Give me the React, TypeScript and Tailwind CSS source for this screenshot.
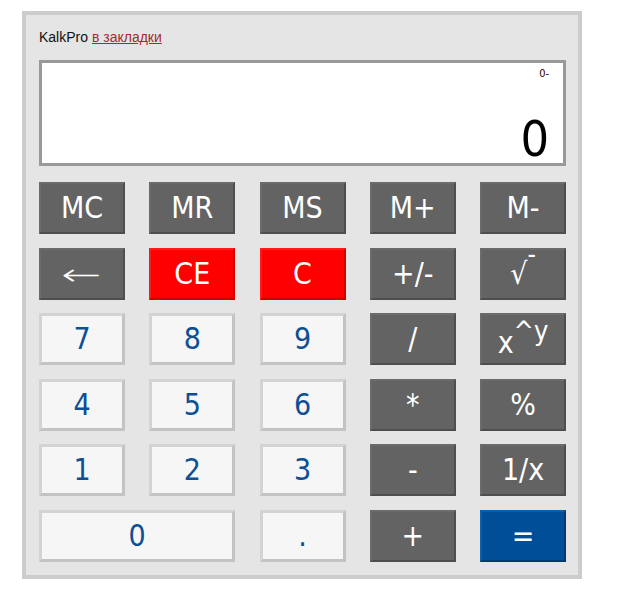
import React from 'react';

type Kind = 'dark' | 'red' | 'digit' | 'equal';

interface Key {
    label: React.ReactNode;
    kind: Kind;
    span?: boolean;
}

const keys: Key[] = [
    { label: 'MC', kind: 'dark' },
    { label: 'MR', kind: 'dark' },
    { label: 'MS', kind: 'dark' },
    { label: 'M+', kind: 'dark' },
    { label: 'M-', kind: 'dark' },
    { label: <span className="inline-block scale-x-[1.6]" style={{ fontFamily: '"Noto Sans", "DejaVu Sans", sans-serif', fontWeight: 300 }}>←</span>, kind: 'dark' },
    { label: 'CE', kind: 'red' },
    { label: 'C', kind: 'red' },
    { label: '+/-', kind: 'dark' },
    { label: <span>√<sup className="text-[26px] -top-[0.8em]">-</sup></span>, kind: 'dark' },
    { label: '7', kind: 'digit' },
    { label: '8', kind: 'digit' },
    { label: '9', kind: 'digit' },
    { label: '/', kind: 'dark' },
    { label: <span className="pt-[8px]">x<sup className="text-[27px] -top-[0.5em]">^y</sup></span>, kind: 'dark' },
    { label: '4', kind: 'digit' },
    { label: '5', kind: 'digit' },
    { label: '6', kind: 'digit' },
    { label: '*', kind: 'dark' },
    { label: '%', kind: 'dark' },
    { label: '1', kind: 'digit' },
    { label: '2', kind: 'digit' },
    { label: '3', kind: 'digit' },
    { label: '-', kind: 'dark' },
    { label: '1/x', kind: 'dark' },
    { label: '0', kind: 'digit', span: true },
    { label: '.', kind: 'digit' },
    { label: '+', kind: 'dark' },
    { label: '=', kind: 'equal' },
];

const kindClass: Record<Kind, string> = {
    dark: 'bg-[#636363] text-white border-2 border-t-[#6b6b6b] border-l-[#6b6b6b] border-b-[#4e4e4e] border-r-[#4e4e4e]',
    red: 'bg-[#ff0000] text-white border-2 border-t-[#ff1a1a] border-l-[#ff1a1a] border-b-[#cc0000] border-r-[#cc0000]',
    digit: 'bg-[#f6f6f6] text-[#0d4f94] border-[3px] border-t-[#d3d3d3] border-l-[#d3d3d3] border-b-[#c3c3c3] border-r-[#c3c3c3]',
    equal: 'bg-[#004e98] text-white border-2 border-t-[#0a5fae] border-l-[#0a5fae] border-b-[#003a74] border-r-[#003a74]',
};

export default function App() {
    return (
        <div className="w-[620px] h-[599px] bg-white pt-[11px] pl-[22px]">
            <div
                className="w-[560px] h-[568px] border-4 border-[#cccccc] bg-[#e5e5e5] pl-[13px] pr-[12px] pt-[14px]"
                style={{ boxSizing: 'border-box' }}
            >
                <div className="h-[16px] leading-[16px] text-[14px] text-[#111] mb-[15px]" style={{ fontFamily: '"Liberation Sans", Arial, sans-serif' }}>
                    KalkPro <a href="#" className="text-[#a52a2a] underline">в закладки</a>
                </div>

                <div
                    className="h-[106px] border-[3px] border-[#999999] bg-white flex flex-col items-end pr-[14px]"
                    style={{ fontFamily: '"DejaVu Sans Condensed", "DejaVu Sans", sans-serif' }}
                >
                    <div className="text-[11px] leading-[12px] mt-[5px] text-[#330000]">0-</div>
                    <div className="text-[50px] leading-[56px] mt-auto mb-[-4px] text-black">0</div>
                </div>

                <div
                    className="mt-[16px] grid grid-cols-5 gap-x-[24.25px] gap-y-[13.5px]"
                    style={{ fontFamily: '"DejaVu Sans Condensed", "DejaVu Sans", sans-serif', fontStretch: 'condensed' }}
                >
                    {keys.map((k, i) => (
                        <button
                            key={i}
                            className={`h-[52px] flex items-center justify-center text-[30px] leading-none ${k.span ? 'col-span-2' : ''} ${kindClass[k.kind]}`}
                        >
                            {k.label}
                        </button>
                    ))}
                </div>
            </div>
        </div>
    );
}
